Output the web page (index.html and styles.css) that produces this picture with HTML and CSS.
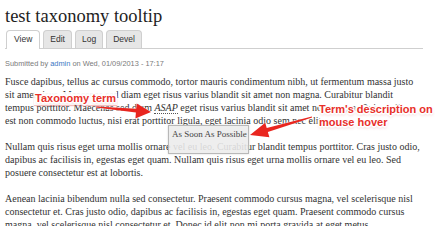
FILE: index.html
```html
<!DOCTYPE html>
<html lang="en">
<head>
<meta charset="utf-8">
<title>test taxonomy tooltip</title>
<link rel="stylesheet" href="styles.css">
</head>
<body>
<div class="page">
  <h1 class="title">test taxonomy tooltip</h1>
  <ul class="tabs">
    <li class="tab active">View</li>
    <li class="tab">Edit</li>
    <li class="tab">Log</li>
    <li class="tab">Devel</li>
  </ul>
  <p class="meta">Submitted by <a class="user" href="#">admin</a> on Wed, 01/09/2013 - 17:17</p>
  <div class="content">
    <p>Fusce dapibus, tellus ac cursus commodo, tortor mauris condimentum nibh, ut fermentum massa justo sit amet risus. Maecenas sed diam eget risus varius blandit sit amet non magna. Curabitur blandit tempus porttitor. Maecenas sed diam <span class="term">ASAP</span> eget risus varius blandit sit amet non magna. Duis mollis, est non commodo luctus, nisi erat porttitor ligula, eget lacinia odio sem nec elit.</p>
    <p>Nullam quis risus eget urna mollis ornare vel eu leo. Curabitur blandit tempus porttitor. Cras justo odio, dapibus ac facilisis in, egestas eget quam. Nullam quis risus eget urna mollis ornare vel eu leo. Sed posuere consectetur est at lobortis.</p>
    <p>Aenean lacinia bibendum nulla sed consectetur. Praesent commodo cursus magna, vel scelerisque nisl consectetur et. Cras justo odio, dapibus ac facilisis in, egestas eget quam. Praesent commodo cursus magna, vel scelerisque nisl consectetur et. Donec id elit non mi porta gravida at eget metus.</p>
  </div>
  <div class="tooltip">As Soon As Possible</div>
  <svg class="arrows" width="440" height="226" viewBox="0 0 440 226">
    <polygon class="arrow" points="95.95,103.6 135.9,108.6 135.4,114.6 151,108 136.7,99.6 136.2,104.8 96.05,102.6"/>
    <polygon class="arrow" points="311.86,112.52 266.73,124.06 265.2,118.78 250,131 269.38,133.18 267.85,127.9 312.14,113.48"/>
  </svg>
  <div class="note note-term">Taxonomy term</div>
  <div class="note note-desc">Term's description on<br>mouse hover</div>
</div>
</body>
</html>
```

FILE: styles.css
```css
html, body {
  margin: 0;
  padding: 0;
  background: #fff;
}

body {
  overflow: hidden;
}

.page {
  position: relative;
  width: 418px;
  height: 226px;
  padding-left: 5px;
  font-family: "Liberation Serif", "Times New Roman", serif;
  color: #333;
}

.title {
  margin: 4px 0 0;
  font-family: "Liberation Serif", "Times New Roman", serif;
  font-weight: normal;
  font-size: 18.5px;
  line-height: 24px;
  color: #1e1e1e;
}

.tabs {
  display: flex;
  gap: 3px;
  margin: 2px 0 0;
  padding: 0 0 0 1px;
  list-style: none;
  border-bottom: 1px solid #cfcfcf;
  height: 18px;
}

.tab {
  box-sizing: border-box;
  height: 18px;
  padding: 0 6px;
  font-family: "Liberation Sans", Arial, sans-serif;
  font-size: 8.5px;
  line-height: 17px;
  color: #333;
  background: #e6e6e6;
  border: 1px solid #cfcfcf;
  border-bottom: none;
  border-radius: 4px 4px 0 0;
}

.tab.active {
  height: 19px;
  margin-bottom: -1px;
  background: #fff;
  padding: 0 7px;
}

.meta {
  margin: 10px 0 0;
  font-family: "Liberation Sans", Arial, sans-serif;
  font-size: 7.4px;
  line-height: 10px;
  color: #7a7a7a;
}

.user {
  color: #3a78c3;
  text-decoration: none;
}

.content {
  margin-top: 6px;
  font-size: 10px;
  line-height: 13px;
}

.content p {
  margin: 0 0 13px;
}

.term {
  font-style: italic;
  border-bottom: 1px dotted #555;
}

.tooltip {
  position: absolute;
  left: 168px;
  top: 121px;
  box-sizing: border-box;
  width: 81px;
  height: 29px;
  padding: 2px 0 0 3px;
  font-family: "Liberation Serif", "Times New Roman", serif;
  font-size: 9px;
  line-height: 13px;
  color: #444;
  background: rgba(236, 236, 236, 0.88);
  border: 1px solid #b8b8b8;
  box-shadow: 0 0 2px rgba(0, 0, 0, 0.15);
}

.arrows {
  position: absolute;
  left: 0;
  top: 0;
}

.arrow {
  fill: #e9261f;
  stroke: rgba(255, 255, 255, 0.85);
  stroke-width: 0.8;
  stroke-linejoin: round;
  paint-order: stroke;
}

.note {
  position: absolute;
  white-space: nowrap;
  font-family: "Liberation Sans", Arial, sans-serif;
  font-weight: bold;
  font-size: 11px;
  line-height: 13px;
  color: #e8302a;
  text-shadow:
    1px 0 0 #fff, -1px 0 0 #fff, 0 1px 0 #fff, 0 -1px 0 #fff,
    1px 1px 0 #fff, -1px -1px 0 #fff, 1px -1px 0 #fff, -1px 1px 0 #fff,
    2px 0 1px #fff, -2px 0 1px #fff, 0 2px 1px #fff, 0 -2px 1px #fff,
    0 2px 3px rgba(200, 40, 40, 0.35);
}

.note-term {
  left: 34px;
  top: 88px;
  padding: 0 1px;
  background: rgba(255, 255, 255, 0.92);
  box-shadow: 0 1px 1px rgba(230, 80, 80, 0.35);
}

.note-desc {
  left: 319px;
  top: 99px;
}
```
